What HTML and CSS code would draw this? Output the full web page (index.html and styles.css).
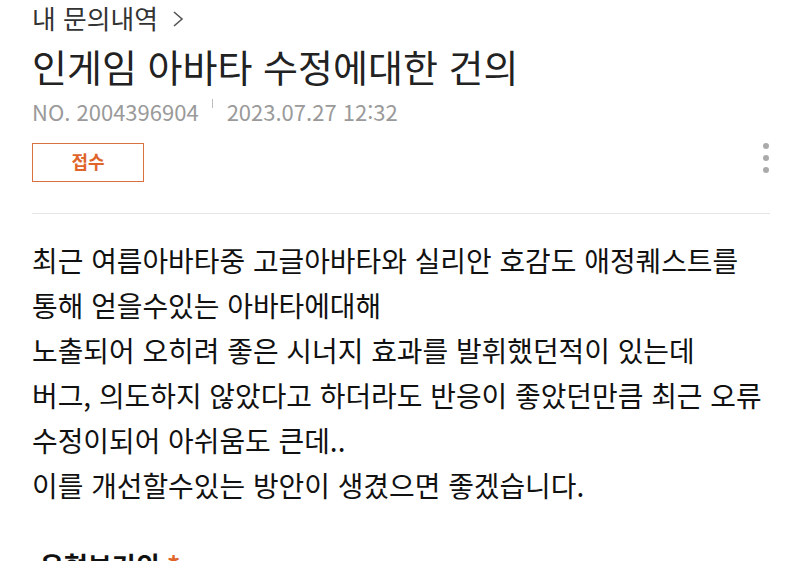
FILE: index.html
```html
<!DOCTYPE html>
<html lang="ko">
<head>
<meta charset="utf-8">
<link rel="stylesheet" href="styles.css">
</head>
<body>
<div class="page">
  <div class="crumb">내 문의내역 <svg class="chev" width="12" height="18" viewBox="0 0 12 18"><path d="M2 2 L10 9 L2 16" fill="none" stroke="#555" stroke-width="1.6"/></svg></div>
  <h1 class="title">인게임 아바타 수정에대한 건의</h1>
  <div class="meta"><span>NO. 2004396904</span><span class="sep"></span><span>2023.07.27 12:32</span></div>
  <div class="status-row">
    <div class="badge">접수</div>
    <div class="kebab"><i></i><i></i><i></i></div>
  </div>
  <hr class="divider">
  <div class="content">
    <p>최근 여름아바타중 고글아바타와 실리안 호감도 애정퀘스트를<br>통해 얻을수있는 아바타에대해<br>노출되어 오히려 좋은 시너지 효과를 발휘했던적이 있는데<br>버그, 의도하지 않았다고 하더라도 반응이 좋았던만큼 최근 오류<br>수정이되어 아쉬움도 큰데..<br>이를 개선할수있는 방안이 생겼으면 좋겠습니다.</p>
  </div>
  <div class="sub">유형보기의 <span class="mark">*</span></div>
</div>
</body>
</html>
```
FILE: styles.css
```css
html, body { margin: 0; padding: 0; background: #fff; }
body { font-family: "Noto Sans CJK KR", "Noto Sans", sans-serif; color: #222; overflow: hidden; }
.page { padding: 0 30px 0 32px; }
.crumb { display: flex; align-items: center; font-size: 25.8px; line-height: 36px; color: #333; }
.chev { margin-left: 14px; margin-top: 1px; }
.title { margin: 3px 0 0; font-size: 38px; font-weight: 400; line-height: 54px; color: #222; }
.meta { display: flex; align-items: center; margin-top: 2px; font-size: 22px; line-height: 32px; color: #9a9a9a; }
.sep { width: 1px; height: 9px; background: #bdbdbd; margin: 0 14px 0 13px; position: relative; top: -8px; }
.status-row { display: flex; justify-content: space-between; align-items: flex-start; margin-top: 16px; }
.badge { box-sizing: border-box; width: 112px; height: 39px; border: 1.5px solid #d9703f; color: #e0652b; font-weight: 700; font-size: 18px; line-height: 35px; text-align: center; }
.kebab { display: flex; flex-direction: column; gap: 6px; padding: 0 1px; margin-top: 0; }
.kebab i { width: 6px; height: 6px; border-radius: 50%; background: #aaa; display: block; }
.divider { border: 0; border-top: 1px solid #e6e6e6; margin: 31px 0 0; }
.content p { margin: 24px 0 0; font-size: 27.9px; line-height: 45px; color: #111; }
.sub { margin-top: 38px; padding-left: 8px; font-size: 26px; font-weight: 700; color: #111; }
.mark { color: #e0652b; }
```
